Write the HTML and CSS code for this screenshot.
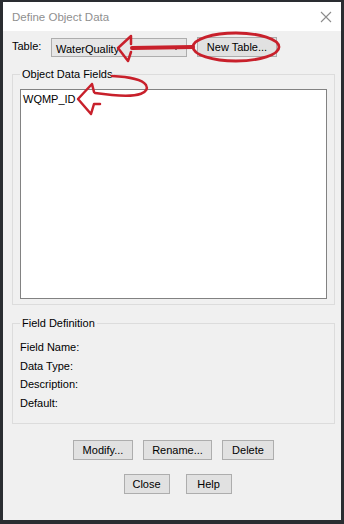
FILE: index.html
```html
<!DOCTYPE html>
<html lang="en">
<head>
  <meta charset="UTF-8" />
  <title>Define Object Data</title>
  <meta name="viewport" content="width=device-width, initial-scale=1.0" />
  <link rel="stylesheet" href="styles.css">
</head>
<body>
  <div class="window">
    <div class="titlebar">
      <span class="title">Define Object Data</span>
      <svg class="close-x" width="12" height="12" viewBox="0 0 12 12">
        <path d="M1 1 L11 11 M11 1 L1 11" stroke="#8c8c8c" stroke-width="1.1" fill="none" />
      </svg>
    </div>

    <div class="content">
      <div class="table-row">
        <span class="table-label">Table:</span>
        <div class="combo">
          <span>WaterQuality</span>
          <svg width="8" height="5" viewBox="0 0 8 5">
            <path d="M1 1 L4 4 L7 1" stroke="#7a7a7a" stroke-width="1" fill="none" />
          </svg>
        </div>
        <button class="btn btn-new">New Table...</button>
      </div>

      <fieldset class="group fields-group">
        <legend>Object Data Fields</legend>
        <div class="listbox">
          <div class="list-item">WQMP_ID</div>
        </div>
      </fieldset>

      <fieldset class="group def-group">
        <legend>Field Definition</legend>
        <div class="def-row">Field Name:</div>
        <div class="def-row">Data Type:</div>
        <div class="def-row">Description:</div>
        <div class="def-row">Default:</div>
      </fieldset>

      <div class="btn-row">
        <button class="btn btn-modify">Modify...</button>
        <button class="btn btn-rename">Rename...</button>
        <button class="btn btn-delete">Delete</button>
      </div>

      <div class="btn-row btn-row-bottom">
        <button class="btn btn-small">Close</button>
        <button class="btn btn-small">Help</button>
      </div>
    </div>

    <!-- red markup drawn over the dialog -->
    <svg class="markup" width="344" height="524" viewBox="0 0 344 524">
      <g stroke="#c8202b" fill="none" stroke-linejoin="round" stroke-linecap="round">
        <path d="M131 44 L131 36 L118 48 L128 61 L131 52" stroke-width="2.5" />
        <path d="M132 48 L193 47" stroke-width="4" />
        <ellipse cx="236" cy="47" rx="43" ry="14" stroke-width="2.8" />
        <path d="M94 92 L92 84 L78 99 L91 114 L94 104 L100 104" stroke-width="2.5" />
        <path d="M95 93 L112 95 C140 98 150 92 146 85 C142 79 130 77 112 76" stroke-width="2.5" />
      </g>
    </svg>
  </div>
</body>
</html>
```

FILE: styles.css
```css
* {
  box-sizing: border-box;
}

body {
  margin: 0;
  background: #2a2d31;
  font-family: "Liberation Sans", Arial, sans-serif;
  font-size: 11px;
  color: #000;
}

.window {
  position: relative;
  width: 344px;
  height: 524px;
  border-style: solid;
  border-color: #2a2d31;
  border-width: 2px 3px 4px 3px;
  display: flex;
  flex-direction: column;
}

.titlebar {
  height: 29px;
  background: #fff;
  display: flex;
  align-items: center;
  justify-content: space-between;
  padding: 0 9px 0 9px;
}

.title {
  font-size: 11.5px;
  color: #8f8f8f;
}

.content {
  flex: 1;
  background: #f0f0f0;
  padding: 6px 6px 0 9px;
}

.table-row {
  display: flex;
  align-items: center;
  height: 20px;
}

.table-label {
  width: 39px;
  padding-bottom: 3px;
}

.combo {
  width: 136px;
  height: 19px;
  margin-top: 1px;
  background: #e6e6e6;
  border: 1px solid #adadad;
  display: flex;
  align-items: center;
  justify-content: space-between;
  padding: 2px 6px 0 4px;
}

.btn {
  font-family: "Liberation Sans", Arial, sans-serif;
  font-size: 11px;
  color: #000;
  background: #e1e1e1;
  border: 1px solid #adadad;
  height: 20px;
  padding: 0;
}

.btn-new {
  width: 80px;
  margin-left: 10px;
}

.group {
  margin: 0;
  border: 1px solid #dcdcdc;
  width: 323px;
}

.group legend {
  padding: 0 2px;
  line-height: 13px;
}

.fields-group {
  margin-top: 11px;
  padding: 8px 7px 5px 7px;
}

.listbox {
  height: 210px;
  background: #fff;
  border: 1px solid #828282;
  padding: 3px 2px;
}

.list-item {
  line-height: 13px;
}

.def-group {
  margin-top: 12px;
  padding: 8px 7px 10px 7px;
}

.def-row {
  height: 18.7px;
  line-height: 18.7px;
}

.btn-row {
  display: flex;
  justify-content: center;
  gap: 10px;
  margin-top: 16px;
}

.btn-modify {
  width: 60px;
}

.btn-rename {
  width: 69px;
}

.btn-delete {
  width: 52px;
}

.btn-row-bottom {
  gap: 16px;
  margin-top: 14px;
  padding-left: 8px;
}

.btn-small {
  width: 46px;
}

.markup {
  position: absolute;
  top: -2px;
  left: -3px;
  pointer-events: none;
}
```
